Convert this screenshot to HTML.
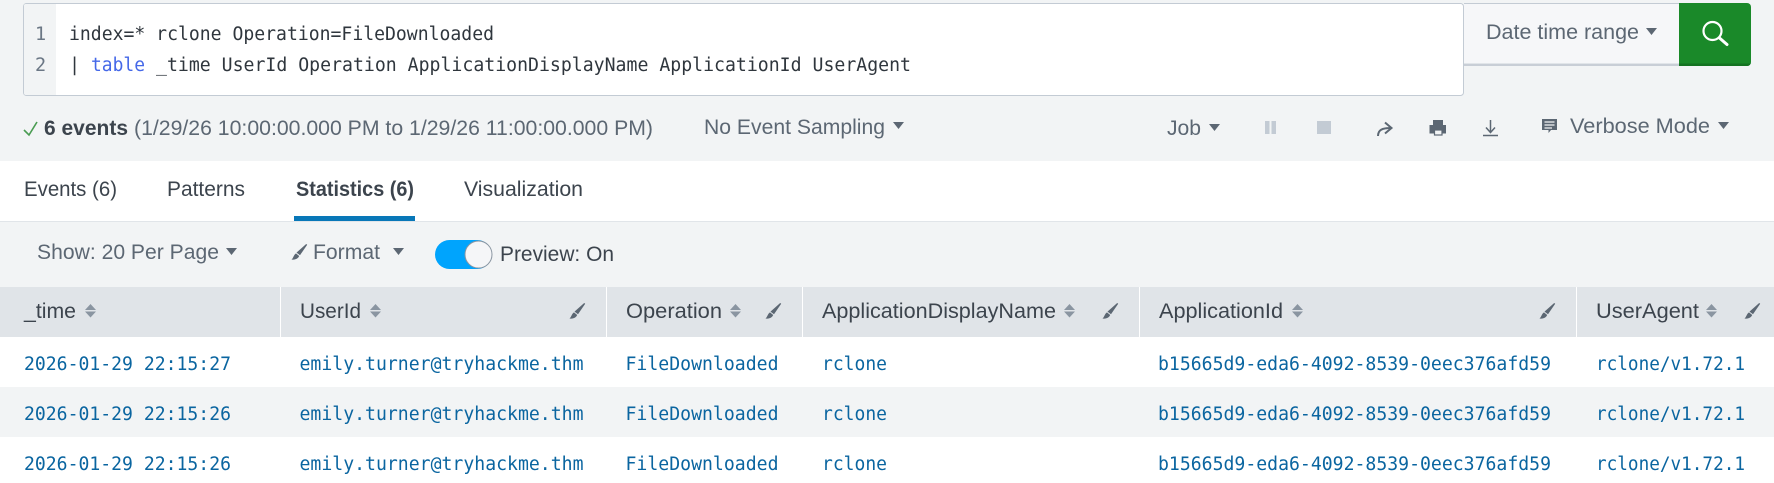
<!DOCTYPE html>
<html lang="en">
<head>
<meta charset="utf-8">
<title>Search</title>
<style>
html,body{margin:0;padding:0;width:1774px;height:483px;overflow:hidden;background:#f2f4f5}
svg{display:block;position:absolute;left:0;top:0}
.s{font-family:"Liberation Sans",sans-serif;font-size:20.800px;fill:#5c6773}
.d{fill:#3c444d}
.b{font-weight:bold;fill:#3c444d}
.m{font-family:"DejaVu Sans Mono","Liberation Mono",monospace;font-size:18.500px;fill:#2f363d}
.l{fill:#0a65a0}
</style>
</head>
<body>
<svg width="1774" height="483" viewBox="0 0 1774 483" xmlns="http://www.w3.org/2000/svg">
<defs>
<path id="car" d="M0 0H11L5.500 7Z" fill="#5c6773"/>
<g id="sort" fill="#8a95a1"><path d="M0 6L5.500 0L11 6Z"/><path d="M0 7.500H11L5.500 13.500Z"/></g>
<g id="br" fill="#5c6773"><path d="M15.200 0L16.200 .8L9 11.200L5.500 8.600Z"/><path d="M5 9.400L8.200 12C7 15 3.500 16 .5 15.500C2.500 14 2.500 11 5 9.400Z"/></g>
</defs>

<!-- editor -->
<rect x="23.500" y="3.500" width="1440" height="92" rx="3" fill="#fff" stroke="#c3cbd4"/>
<path d="M24 5a2 2 0 0 1 2-1H56V95H26a2 2 0 0 1-2-2Z" fill="#f2f4f5"/>
<text class="m" x="35" y="40" style="fill:#6b7785">1</text>
<text class="m" x="35" y="71" style="fill:#6b7785">2</text>
<text class="m" x="69" y="40" textLength="425" lengthAdjust="spacingAndGlyphs">index=* rclone Operation=FileDownloaded</text>
<text class="m" x="69" y="71">|</text>
<text class="m" x="91" y="71" textLength="54" lengthAdjust="spacingAndGlyphs" style="fill:#4568e8">table</text>
<text class="m" x="156" y="71" textLength="755" lengthAdjust="spacingAndGlyphs">_time UserId Operation ApplicationDisplayName ApplicationId UserAgent</text>

<!-- date range -->
<rect x="1464" y="3" width="215" height="63" fill="#f6f7f9"/>
<rect x="1464" y="3" width="215" height="1" fill="#c3cbd4"/>
<rect x="1464" y="63" width="215" height="1" fill="#e1e5e9"/>
<rect x="1464" y="64" width="215" height="2" fill="#c8ced6"/>
<text class="s" x="1486" y="39" textLength="153" lengthAdjust="spacingAndGlyphs">Date time range</text>
<use href="#car" x="1646" y="28"/>
<path d="M1679 3H1747a4 4 0 0 1 4 4V62a4 4 0 0 1-4 4H1679Z" fill="#1a8929"/>
<path d="M1679 63.500H1751V62a4 4 0 0 1-4 4H1679Z" fill="#147321"/>
<circle cx="1712.500" cy="31" r="9" fill="none" stroke="#fff" stroke-width="2.200"/>
<path d="M1719.500 38L1727 44.500" stroke="#fff" stroke-width="3" stroke-linecap="round"/>

<!-- status row -->
<path d="M24 130L29 135L37 122" fill="none" stroke="#4a9c52" stroke-width="1.600"/>
<text class="s b" x="44" y="135" textLength="84" lengthAdjust="spacingAndGlyphs">6 events</text>
<text class="s" x="134" y="135" textLength="519" lengthAdjust="spacingAndGlyphs">(1/29/26 10:00:00.000 PM to 1/29/26 11:00:00.000 PM)</text>
<text class="s" x="704" y="134" textLength="181" lengthAdjust="spacingAndGlyphs">No Event Sampling</text>
<use href="#car" x="893" y="122"/>
<text class="s" x="1167" y="135" textLength="34" lengthAdjust="spacingAndGlyphs">Job</text>
<use href="#car" x="1209" y="124"/>
<rect x="1265" y="121" width="4.500" height="13" fill="#c3cbd4"/>
<rect x="1271.500" y="121" width="4.500" height="13" fill="#c3cbd4"/>
<rect x="1317" y="121" width="14" height="13" fill="#c3cbd4"/>
<g fill="none" stroke="#5c6773" stroke-width="2"><path d="M1378 136C1378 130 1382 128 1391 128"/><path d="M1385 122.500L1391.500 128L1385 133.500"/></g>
<path d="M1433 120H1443V125H1446V133.500H1429.500V125H1433Z" fill="#5c6773"/>
<rect x="1434.500" y="130" width="7.500" height="5" fill="#f2f4f5" stroke="#5c6773" stroke-width="1.200"/>
<g fill="none" stroke="#5c6773" stroke-width="1.500"><path d="M1490.500 120V132"/><path d="M1486 127.500L1490.500 132.500L1495 127.500"/><path d="M1483 135.500H1498"/></g>
<path d="M1542 119H1557V130H1551L1548.500 133V130H1542Z" fill="#5c6773"/>
<path d="M1544.500 122H1554.500M1544.500 125H1554.500M1544.500 128H1552" stroke="#f2f4f5" stroke-width="1.300"/>
<text class="s" x="1570" y="133" textLength="140" lengthAdjust="spacingAndGlyphs">Verbose Mode</text>
<use href="#car" x="1718" y="122"/>

<!-- tabs -->
<rect x="0" y="161" width="1774" height="60" fill="#fff"/>
<rect x="0" y="221" width="1774" height="1" fill="#e1e5e9"/>
<text class="s d" x="24" y="196" textLength="93" lengthAdjust="spacingAndGlyphs">Events (6)</text>
<text class="s d" x="167" y="196" textLength="78" lengthAdjust="spacingAndGlyphs">Patterns</text>
<text class="s b" x="296" y="196" textLength="118" lengthAdjust="spacingAndGlyphs">Statistics (6)</text>
<text class="s d" x="464" y="196" textLength="119" lengthAdjust="spacingAndGlyphs">Visualization</text>
<rect x="294" y="216" width="121" height="5" fill="#0877b8"/>

<!-- toolbar -->
<text class="s" x="37" y="259" textLength="182" lengthAdjust="spacingAndGlyphs">Show: 20 Per Page</text>
<use href="#car" x="226" y="248"/>
<use href="#br" x="291" y="244"/>
<text class="s" x="313" y="259" textLength="67" lengthAdjust="spacingAndGlyphs">Format</text>
<use href="#car" x="393" y="248"/>
<rect x="435" y="240" width="57" height="29" rx="14.500" fill="#00a4fd"/>
<circle cx="478.500" cy="254.500" r="13.500" fill="#f5f6f8" stroke="#8a95a1" stroke-width="1"/>
<text class="s d" x="500" y="261" textLength="114" lengthAdjust="spacingAndGlyphs">Preview: On</text>

<!-- table header -->
<rect x="0" y="287" width="1774" height="50" fill="#e0e4e8"/>
<g fill="#fff">
<rect x="280" y="287" width="1" height="50"/>
<rect x="606" y="287" width="1" height="50"/>
<rect x="802" y="287" width="1" height="50"/>
<rect x="1139" y="287" width="1" height="50"/>
<rect x="1576" y="287" width="1" height="50"/>
</g>
<text class="s d" x="24" y="318" textLength="52" lengthAdjust="spacingAndGlyphs">_time</text>
<use href="#sort" x="85" y="304"/>
<text class="s d" x="300" y="318" textLength="61" lengthAdjust="spacingAndGlyphs">UserId</text>
<use href="#sort" x="370" y="304"/>
<use href="#br" x="569" y="303"/>
<text class="s d" x="626" y="318" textLength="96" lengthAdjust="spacingAndGlyphs">Operation</text>
<use href="#sort" x="730" y="304"/>
<use href="#br" x="765" y="303"/>
<text class="s d" x="822" y="318" textLength="234" lengthAdjust="spacingAndGlyphs">ApplicationDisplayName</text>
<use href="#sort" x="1064" y="304"/>
<use href="#br" x="1102" y="303"/>
<text class="s d" x="1159" y="318" textLength="124" lengthAdjust="spacingAndGlyphs">ApplicationId</text>
<use href="#sort" x="1292" y="304"/>
<use href="#br" x="1539" y="303"/>
<text class="s d" x="1596" y="318" textLength="103" lengthAdjust="spacingAndGlyphs">UserAgent</text>
<use href="#sort" x="1706" y="304"/>
<use href="#br" x="1744" y="303"/>

<!-- rows -->
<rect x="0" y="337" width="1774" height="50" fill="#fff"/>
<rect x="0" y="387" width="1774" height="50" fill="#f2f4f5"/>
<rect x="0" y="437" width="1774" height="46" fill="#fff"/>

<g class="m">
<text class="m l" x="24" y="370" textLength="207" lengthAdjust="spacingAndGlyphs">2026-01-29 22:15:27</text>
<text class="m l" x="299.500" y="370" textLength="284" lengthAdjust="spacingAndGlyphs">emily.turner@tryhackme.thm</text>
<text class="m l" x="625.500" y="370" textLength="153" lengthAdjust="spacingAndGlyphs">FileDownloaded</text>
<text class="m l" x="822" y="370" textLength="65" lengthAdjust="spacingAndGlyphs">rclone</text>
<text class="m l" x="1158" y="370" textLength="393" lengthAdjust="spacingAndGlyphs">b15665d9-eda6-4092-8539-0eec376afd59</text>
<text class="m l" x="1596" y="370" textLength="149" lengthAdjust="spacingAndGlyphs">rclone/v1.72.1</text>

<text class="m l" x="24" y="420" textLength="207" lengthAdjust="spacingAndGlyphs">2026-01-29 22:15:26</text>
<text class="m l" x="299.500" y="420" textLength="284" lengthAdjust="spacingAndGlyphs">emily.turner@tryhackme.thm</text>
<text class="m l" x="625.500" y="420" textLength="153" lengthAdjust="spacingAndGlyphs">FileDownloaded</text>
<text class="m l" x="822" y="420" textLength="65" lengthAdjust="spacingAndGlyphs">rclone</text>
<text class="m l" x="1158" y="420" textLength="393" lengthAdjust="spacingAndGlyphs">b15665d9-eda6-4092-8539-0eec376afd59</text>
<text class="m l" x="1596" y="420" textLength="149" lengthAdjust="spacingAndGlyphs">rclone/v1.72.1</text>

<text class="m l" x="24" y="470" textLength="207" lengthAdjust="spacingAndGlyphs">2026-01-29 22:15:26</text>
<text class="m l" x="299.500" y="470" textLength="284" lengthAdjust="spacingAndGlyphs">emily.turner@tryhackme.thm</text>
<text class="m l" x="625.500" y="470" textLength="153" lengthAdjust="spacingAndGlyphs">FileDownloaded</text>
<text class="m l" x="822" y="470" textLength="65" lengthAdjust="spacingAndGlyphs">rclone</text>
<text class="m l" x="1158" y="470" textLength="393" lengthAdjust="spacingAndGlyphs">b15665d9-eda6-4092-8539-0eec376afd59</text>
<text class="m l" x="1596" y="470" textLength="149" lengthAdjust="spacingAndGlyphs">rclone/v1.72.1</text>
</g>
</svg>
</body>
</html>
